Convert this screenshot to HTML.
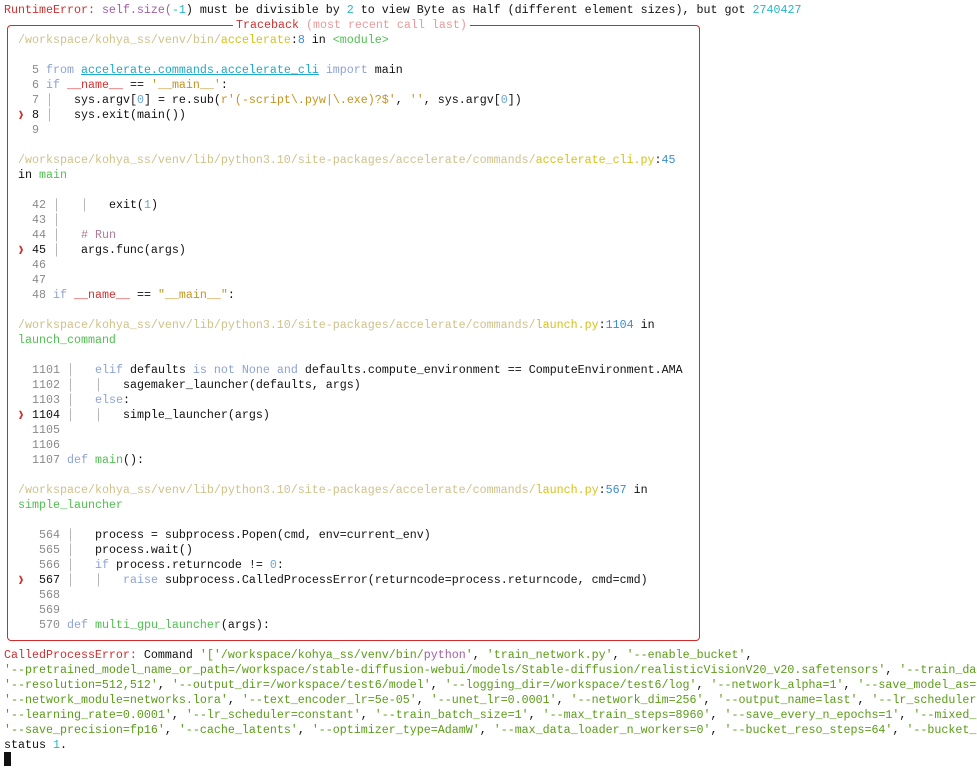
<!DOCTYPE html>
<html><head><meta charset="utf-8"><style>
html,body{margin:0;padding:0;background:#fff;width:977px;height:776px;overflow:hidden}
body{font-family:"Liberation Mono",monospace;font-size:11.67px;color:#111;position:relative}
.r{position:absolute;left:4px;white-space:pre;line-height:15px;height:15px}
.i{left:18px}
.red{color:#cd3131}.pur{color:#a35ea8}.cy{color:#25b6c8}.py{color:#cfc28a}.yl{color:#d8c21a}
.bl{color:#3b8ed0}.gr{color:#50c050}.kw{color:#8ea2d4}.st{color:#c39420}.ln{color:#8a8a8a}
.g{color:#aaa}.cm{color:#b07a98}.nu{color:#6aa6d8}.nm{color:#d83030}.s2{color:#5a9c18}
.lk{color:#1fa8c8;text-decoration:underline}
.ar{display:inline-block;width:7px;overflow:visible;color:#cd3131;font-size:10px}
#box{position:absolute;left:7px;top:25px;width:691px;height:614px;border:1px solid #d02a2a;border-radius:4px;overflow:hidden}
#tt{position:absolute;left:233px;top:18px;background:#fff;padding:0 3px;white-space:pre;line-height:15px}
.clip{position:absolute;left:0;top:0;overflow:hidden}
</style></head><body>
<div class="r" style="top:2.5px"><span class="red">RuntimeError:</span> <span class="pur">self.size(</span><span class="cy">-1</span>) must be divisible by <span class="cy">2</span> to view Byte as Half (different element sizes), but got <span class="cy">2740427</span></div>
<div id="box"></div>
<div id="tt"><span class="red">Traceback</span> <span style="color:#e99a9a">(most recent call last)</span></div>
<div class="clip" style="width:697px;height:640px">
<div class="r i" style="top:32.5px"><span class="py">/workspace/kohya_ss/venv/bin/</span><span class="yl">accelerate</span>:<span class="bl">8</span> in <span class="gr">&lt;module&gt;</span></div>
<div class="r i" style="top:62.5px"><span class="ln">  5</span> <span class="kw">from</span> <span class="lk">accelerate.commands.accelerate_cli</span> <span class="kw">import</span> main</div>
<div class="r i" style="top:77.5px"><span class="ln">  6</span> <span class="kw">if</span> <span class="nm">__name__</span> == <span class="st">'__main__'</span>:</div>
<div class="r i" style="top:92.5px"><span class="ln">  7</span> <span class="g">│</span>   sys.argv[<span class="nu">0</span>] = re.sub(<span class="st">r'(-script\.pyw|\.exe)?$'</span>, <span class="st">''</span>, sys.argv[<span class="nu">0</span>])</div>
<div class="r i" style="top:107.5px"><span class="ar">❱</span> 8 <span class="g">│</span>   sys.exit(main())</div>
<div class="r i" style="top:122.5px"><span class="ln">  9</span></div>
<div class="r i" style="top:152.5px"><span class="py">/workspace/kohya_ss/venv/lib/python3.10/site-packages/accelerate/commands/</span><span class="yl">accelerate_cli.py</span>:<span class="bl">45</span></div>
<div class="r i" style="top:167.5px">in <span class="gr">main</span></div>
<div class="r i" style="top:197.5px"><span class="ln">  42</span> <span class="g">│   │</span>   exit(<span class="nu">1</span>)</div>
<div class="r i" style="top:212.5px"><span class="ln">  43</span> <span class="g">│</span></div>
<div class="r i" style="top:227.5px"><span class="ln">  44</span> <span class="g">│</span>   <span class="cm"># Run</span></div>
<div class="r i" style="top:242.5px"><span class="ar">❱</span> 45 <span class="g">│</span>   args.func(args)</div>
<div class="r i" style="top:257.5px"><span class="ln">  46</span></div>
<div class="r i" style="top:272.5px"><span class="ln">  47</span></div>
<div class="r i" style="top:287.5px"><span class="ln">  48</span> <span class="kw">if</span> <span class="nm">__name__</span> == <span class="st">"__main__"</span>:</div>
<div class="r i" style="top:317.5px"><span class="py">/workspace/kohya_ss/venv/lib/python3.10/site-packages/accelerate/commands/</span><span class="yl">launch.py</span>:<span class="bl">1104</span> in</div>
<div class="r i" style="top:332.5px"><span class="gr">launch_command</span></div>
<div class="r i" style="top:362.5px"><span class="ln">  1101</span> <span class="g">│</span>   <span class="kw">elif</span> defaults <span class="kw">is not</span> <span class="kw">None</span> <span class="kw">and</span> defaults.compute_environment == ComputeEnvironment.AMA</div>
<div class="r i" style="top:377.5px"><span class="ln">  1102</span> <span class="g">│   │</span>   sagemaker_launcher(defaults, args)</div>
<div class="r i" style="top:392.5px"><span class="ln">  1103</span> <span class="g">│</span>   <span class="kw">else</span>:</div>
<div class="r i" style="top:407.5px"><span class="ar">❱</span> 1104 <span class="g">│   │</span>   simple_launcher(args)</div>
<div class="r i" style="top:422.5px"><span class="ln">  1105</span></div>
<div class="r i" style="top:437.5px"><span class="ln">  1106</span></div>
<div class="r i" style="top:452.5px"><span class="ln">  1107</span> <span class="kw">def</span> <span class="gr">main</span>():</div>
<div class="r i" style="top:482.5px"><span class="py">/workspace/kohya_ss/venv/lib/python3.10/site-packages/accelerate/commands/</span><span class="yl">launch.py</span>:<span class="bl">567</span> in</div>
<div class="r i" style="top:497.5px"><span class="gr">simple_launcher</span></div>
<div class="r i" style="top:527.5px"><span class="ln">   564</span> <span class="g">│</span>   process = subprocess.Popen(cmd, env=current_env)</div>
<div class="r i" style="top:542.5px"><span class="ln">   565</span> <span class="g">│</span>   process.wait()</div>
<div class="r i" style="top:557.5px"><span class="ln">   566</span> <span class="g">│</span>   <span class="kw">if</span> process.returncode != <span class="nu">0</span>:</div>
<div class="r i" style="top:572.5px"><span class="ar">❱</span>  567 <span class="g">│   │</span>   <span class="kw">raise</span> subprocess.CalledProcessError(returncode=process.returncode, cmd=cmd)</div>
<div class="r i" style="top:587.5px"><span class="ln">   568</span></div>
<div class="r i" style="top:602.5px"><span class="ln">   569</span></div>
<div class="r i" style="top:617.5px"><span class="ln">   570</span> <span class="kw">def</span> <span class="gr">multi_gpu_launcher</span>(args):</div>
</div>
<div class="clip" style="width:977px;height:776px">
<div class="r" style="top:647.5px"><span class="red">CalledProcessError:</span> Command <span class="s2">'['/workspace/kohya_ss/venv/bin/</span><span class="pur">python</span><span class="s2">'</span>, <span class="s2">'train_network.py'</span>, <span class="s2">'--enable_bucket'</span>,</div>
<div class="r" style="top:662.5px"><span class="s2">'--pretrained_model_name_or_path=/workspace/stable-diffusion-webui/models/Stable-diffusion/realisticVisionV20_v20.safetensors'</span>, <span class="s2">'--train_da</span></div>
<div class="r" style="top:677.5px"><span class="s2">'--resolution=512,512'</span>, <span class="s2">'--output_dir=/workspace/test6/model'</span>, <span class="s2">'--logging_dir=/workspace/test6/log'</span>, <span class="s2">'--network_alpha=1'</span>, <span class="s2">'--save_model_as=</span></div>
<div class="r" style="top:692.5px"><span class="s2">'--network_module=networks.lora'</span>, <span class="s2">'--text_encoder_lr=5e-05'</span>, <span class="s2">'--unet_lr=0.0001'</span>, <span class="s2">'--network_dim=256'</span>, <span class="s2">'--output_name=last'</span>, <span class="s2">'--lr_scheduler</span></div>
<div class="r" style="top:707.5px"><span class="s2">'--learning_rate=0.0001'</span>, <span class="s2">'--lr_scheduler=constant'</span>, <span class="s2">'--train_batch_size=1'</span>, <span class="s2">'--max_train_steps=8960'</span>, <span class="s2">'--save_every_n_epochs=1'</span>, <span class="s2">'--mixed_</span></div>
<div class="r" style="top:722.5px"><span class="s2">'--save_precision=fp16'</span>, <span class="s2">'--cache_latents'</span>, <span class="s2">'--optimizer_type=AdamW'</span>, <span class="s2">'--max_data_loader_n_workers=0'</span>, <span class="s2">'--bucket_reso_steps=64'</span>, <span class="s2">'--bucket_</span></div>
<div class="r" style="top:737.5px">status <span class="cy">1</span>.</div>
</div>
<div style="position:absolute;left:4px;top:752px;width:7px;height:14px;background:#111"></div>
</body></html>
